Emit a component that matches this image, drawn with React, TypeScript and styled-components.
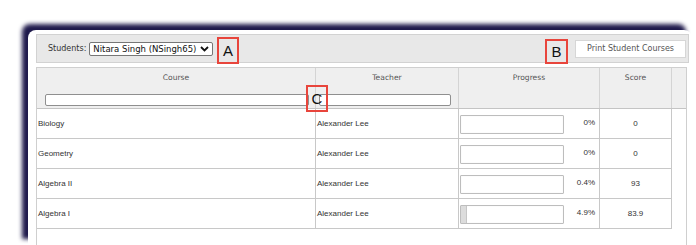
import React from 'react'
import styled, {createGlobalStyle} from 'styled-components'

const courses = [
    {name: 'Biology', teacher: 'Alexander Lee', progress: 0, label: '0%', score: '0'},
    {name: 'Geometry', teacher: 'Alexander Lee', progress: 0, label: '0%', score: '0'},
    {name: 'Algebra II', teacher: 'Alexander Lee', progress: 0.4, label: '0.4%', score: '93'},
    {name: 'Algebra I', teacher: 'Alexander Lee', progress: 4.9, label: '4.9%', score: '83.9'},
]

const Chevron = () => (
    <svg width="9" height="6" viewBox="0 0 9 6">
        <polyline points="1,1 4.5,4.5 8,1" fill="none" stroke="#111" strokeWidth="1.8"/>
    </svg>
)

export default function App() {
    return (
        <>
            <GlobalStyle/>
            <FrameL>
                <ToolbarL>
                    <LabelL>Students:</LabelL>
                    <SelectL>
                        <span>Nitara Singh (NSingh65)</span>
                        <Chevron/>
                    </SelectL>
                    <ButtonL>Print Student Courses</ButtonL>
                </ToolbarL>

                <GridL>
                    <HeaderL>
                        <HeadCellL>
                            Course
                            <FilterL $left={8} $right={6}/>
                        </HeadCellL>
                        <HeadCellL>
                            Teacher
                            <FilterL $left={3} $right={7}/>
                        </HeadCellL>
                        <HeadCellL>Progress</HeadCellL>
                        <HeadCellL>Score</HeadCellL>
                        <GutterL/>
                    </HeaderL>
                    {courses.map(c => (
                        <RowL key={c.name}>
                            <CellL>{c.name}</CellL>
                            <CellL>{c.teacher}</CellL>
                            <ProgressCellL>
                                <BarL>
                                    {c.progress >= 1 && <FillL style={{width: `${c.progress}%`}}/>}
                                </BarL>
                                <PercentL>{c.label}</PercentL>
                            </ProgressCellL>
                            <CellL $center>{c.score}</CellL>
                        </RowL>
                    ))}
                </GridL>

                <MarkerL $x={189} $y={7} $w={22} $h={27}>A</MarkerL>
                <MarkerL $x={517} $y={9} $w={23} $h={25}>B</MarkerL>
                <MarkerL $x={278} $y={55} $w={22} $h={27}>C</MarkerL>
            </FrameL>
        </>
    )
}

// Styles
const GlobalStyle = createGlobalStyle`
  html, body {
    margin: 0;
    background: #fff;
    overflow: hidden;
  }
`

const FrameL = styled.div`
  position: relative;
  box-sizing: border-box;
  margin: 30px 0 0 28px;
  width: 664px;
  height: 215px;
  padding: 4px 3px 0 8px;
  background: #fff;
  border-radius: 8px 8px 0 0;
  box-shadow: -6px -6px 4px 0 #1f1a4c;
  font-family: "DejaVu Sans", Verdana, sans-serif;
`

const ToolbarL = styled.div`
  box-sizing: border-box;
  display: flex;
  align-items: center;
  height: 29px;
  padding: 0 2px 0 11px;
  background: #e8e8e8;
  border: 1px solid #d2d2d2;
`

const LabelL = styled.span`
  font-size: 8px;
  color: #333;
  margin-right: 3px;
`

const SelectL = styled.div`
  box-sizing: border-box;
  display: flex;
  align-items: center;
  justify-content: space-between;
  width: 124px;
  height: 14px;
  padding: 0 3px 0 3px;
  background: #fff;
  border: 1px solid #767676;
  border-radius: 2px;
  font-size: 8.5px;
  color: #111;
  white-space: nowrap;
`

const ButtonL = styled.div`
  box-sizing: border-box;
  display: flex;
  align-items: center;
  justify-content: center;
  margin-left: auto;
  width: 111px;
  height: 18px;
  background: #fff;
  border: 1px solid #d6d6d6;
  font-size: 8px;
  color: #555;
`

const GridL = styled.div`
  box-sizing: border-box;
  margin-top: 4px;
  width: 651px;
  height: 178px;
  border: 1px solid #cfcfcf;
  border-bottom: none;
`

const HeaderL = styled.div`
  display: grid;
  grid-template-columns: 279px 143px 141px 72px 1fr;
  height: 40px;
  background: #efefef;
  border-bottom: 1px solid #c4c4c4;
`

const HeadCellL = styled.div`
  display: flex;
  flex-direction: column;
  align-items: center;
  padding-top: 5px;
  border-right: 1px solid #d4d4d4;
  font-size: 7.6px;
  line-height: 10px;
  color: #555;
`

const GutterL = styled.div``

const FilterL = styled.div<{ $left: number; $right: number }>`
  box-sizing: border-box;
  align-self: stretch;
  margin: 11px ${({$right}) => $right}px 0 ${({$left}) => $left}px;
  height: 12px;
  background: #fff;
  border: 1px solid #8f8f8f;
  border-radius: 2px;
`

const RowL = styled.div`
  display: grid;
  grid-template-columns: 279px 143px 141px 72px;
  width: 635px;
  height: 29px;
  border-bottom: 1px solid #c8c8c8;
`

const CellL = styled.div<{ $center?: boolean }>`
  display: flex;
  align-items: center;
  justify-content: ${({$center}) => ($center ? 'center' : 'flex-start')};
  padding-left: ${({$center}) => ($center ? 0 : 1)}px;
  border-right: 1px solid #c8c8c8;
  font-family: "Liberation Sans", Arial, sans-serif;
  font-size: 8px;
  color: #333;
`

const ProgressCellL = styled.div`
  display: flex;
  align-items: flex-start;
  padding: 6px 4px 0 1px;
  border-right: 1px solid #c8c8c8;
`

const BarL = styled.div`
  box-sizing: border-box;
  display: flex;
  width: 104px;
  height: 19px;
  background: #fff;
  border: 1px solid #bdbdbd;
  border-radius: 1px;
  box-shadow: inset 0 0 1px #ddd;
`

const FillL = styled.div`
  background: #dcdcdc;
  border-right: 1px solid #c6c6c6;
`

const PercentL = styled.span`
  flex: 1;
  text-align: right;
  padding-top: 3px;
  font-family: "Liberation Sans", Arial, sans-serif;
  font-size: 8px;
  color: #333;
`

const MarkerL = styled.div<{ $x: number; $y: number; $w: number; $h: number }>`
  position: absolute;
  left: ${({$x}) => $x}px;
  top: ${({$y}) => $y}px;
  box-sizing: border-box;
  display: flex;
  align-items: center;
  justify-content: center;
  width: ${({$w}) => $w}px;
  height: ${({$h}) => $h}px;
  border: 2px solid #e8453c;
  font-family: "Liberation Sans", Arial, sans-serif;
  font-size: 15px;
  color: #111;
`
